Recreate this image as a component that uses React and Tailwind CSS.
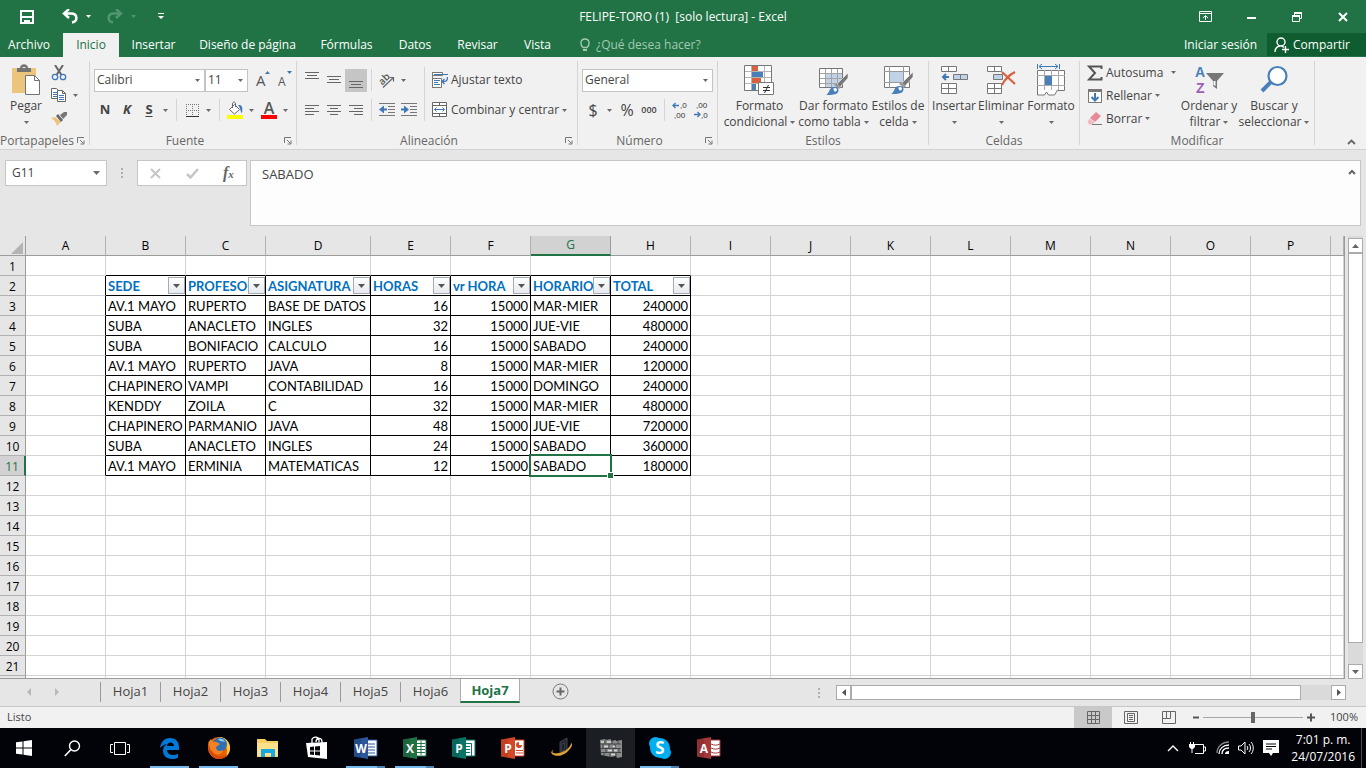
const COLUMNS = [
  { letter: 'A', width: 'w-20' },
  { letter: 'B', width: 'w-20' },
  { letter: 'C', width: 'w-20' },
  { letter: 'D', width: 'w-[105px]' },
  { letter: 'E', width: 'w-20' },
  { letter: 'F', width: 'w-20' },
  { letter: 'G', width: 'w-20' },
  { letter: 'H', width: 'w-20' },
  { letter: 'I', width: 'w-20' },
  { letter: 'J', width: 'w-20' },
  { letter: 'K', width: 'w-20' },
  { letter: 'L', width: 'w-20' },
  { letter: 'M', width: 'w-20' },
  { letter: 'N', width: 'w-20' },
  { letter: 'O', width: 'w-20' },
  { letter: 'P', width: 'w-20' },
  { letter: '', width: 'w-auto' },
]

const HEADERS = ['SEDE', 'PROFESOR', 'ASIGNATURA', 'HORAS', 'vr HORA', 'HORARIO', 'TOTAL']

const DATA = [
  ['AV.1 MAYO', 'RUPERTO', 'BASE DE DATOS', 16, 15000, 'MAR-MIER', 240000],
  ['SUBA', 'ANACLETO', 'INGLES', 32, 15000, 'JUE-VIE', 480000],
  ['SUBA', 'BONIFACIO', 'CALCULO', 16, 15000, 'SABADO', 240000],
  ['AV.1 MAYO', 'RUPERTO', 'JAVA', 8, 15000, 'MAR-MIER', 120000],
  ['CHAPINERO', 'VAMPI', 'CONTABILIDAD', 16, 15000, 'DOMINGO', 240000],
  ['KENDDY', 'ZOILA', 'C', 32, 15000, 'MAR-MIER', 480000],
  ['CHAPINERO', 'PARMANIO', 'JAVA', 48, 15000, 'JUE-VIE', 720000],
  ['SUBA', 'ANACLETO', 'INGLES', 24, 15000, 'SABADO', 360000],
  ['AV.1 MAYO', 'ERMINIA', 'MATEMATICAS', 12, 15000, 'SABADO', 180000],
]

const TABS = [
  { name: 'Inicio', width: 'w-14' },
  { name: 'Insertar', width: 'w-[69px]' },
  { name: 'Diseño de página', width: 'w-[119px]' },
  { name: 'Fórmulas', width: 'w-[79px]' },
  { name: 'Datos', width: 'w-[58px]' },
  { name: 'Revisar', width: 'w-[67px]' },
  { name: 'Vista', width: 'w-[53px]' },
]

const SHEETS = ['Hoja1', 'Hoja2', 'Hoja3', 'Hoja4', 'Hoja5', 'Hoja6', 'Hoja7']
const ACTIVE_SHEET = 'Hoja7'

const SELECTED = { row: 11, col: 6 }
const ROW_COUNT = 22

/* ---------- small shared pieces ---------- */

function Svg({ w = 16, h = 16, children, className = '' }) {
  return (
    <svg width={w} height={h} viewBox={`0 0 ${w} ${h}`} fill="none" className={`shrink-0 ${className}`} aria-hidden="true">
      {children}
    </svg>
  )
}

function Caret({ className = 'text-[#6a6a6a]' }) {
  return (
    <Svg w={5} h={3} className={className}>
      <path d="M0 0h5L2.5 3z" fill="currentColor" />
    </Svg>
  )
}

function Divider({ className = 'h-[22px]' }) {
  return <div className={`w-px shrink-0 bg-[#d4d4d4] ${className}`} />
}

function IconButton({ label, active, children }) {
  return (
    <button
      type="button"
      aria-label={label}
      className={`flex h-[23px] w-[22px] shrink-0 items-center justify-center ${active ? 'bg-[#c5c5c5]' : ''}`}
    >
      {children}
    </button>
  )
}

function CaretButton({ label }) {
  return (
    <button type="button" aria-label={label} className="flex h-[23px] w-2.5 shrink-0 items-center justify-center">
      <Caret />
    </button>
  )
}

function Launcher() {
  return (
    <Svg w={8} h={8}>
      <path d="M.5 6V.5H7M3 3l3.5 3.5M7 3.500V7H3.500" stroke="#777" />
    </Svg>
  )
}

function Group({ title, launcher, width, children }) {
  return (
    <>
      <div className={`flex h-[88px] shrink-0 flex-col ${width}`}>
        <div className="flex h-[72px]">{children}</div>
        <div className="flex h-[17px] items-center text-[#666]">
          <span className="min-w-0 flex-1 text-center leading-[17px] whitespace-nowrap">{title}</span>
          {launcher && (
            <button type="button" aria-label={`Más opciones de ${title}`} className="mx-1 shrink-0">
              <Launcher />
            </button>
          )}
        </div>
      </div>
      <Divider className="h-[84px]" />
    </>
  )
}

function BigButton({ icon, lines, width, caretBelow }) {
  return (
    <button type="button" className={`flex shrink-0 flex-col items-center pt-[3px] leading-4 ${width}`}>
      <span className="mb-0.5 flex h-8 items-center">{icon}</span>
      <span className="whitespace-nowrap">{lines[0]}</span>
      {caretBelow ? (
        <span className="flex h-4 items-center"><Caret /></span>
      ) : (
        <span className="flex items-center gap-[3px] whitespace-nowrap">
          {lines[1]}
          <Caret />
        </span>
      )}
    </button>
  )
}

function Combo({ label, value, width }) {
  return (
    <div className={`relative shrink-0 ${width}`}>
      <select
        aria-label={label}
        defaultValue={value}
        className="h-[23px] w-full appearance-none border border-[#c3c3c3] bg-white pl-0.5 text-[#444] outline-none"
      >
        <option>{value}</option>
      </select>
      <Caret className="pointer-events-none absolute top-2.5 right-[5px] text-[#6a6a6a]" />
    </div>
  )
}

/* ---------- ribbon icons ---------- */

function LinesIcon({ rows }) {
  return (
    <Svg>
      {rows.map(([x, y, w]) => (
        <rect key={y} x={x} y={y} width={w} height="1" fill="#666" />
      ))}
    </Svg>
  )
}

const ALIGN_TOP = [[1, 0, 14], [3, 3, 10], [1, 6, 14]]
const ALIGN_MIDDLE = [[1, 4, 14], [3, 7, 10], [1, 10, 14]]
const ALIGN_BOTTOM = [[1, 9, 14], [3, 12, 10], [1, 15, 14]]
const ALIGN_LEFT = [[1, 3, 14], [1, 6, 9], [1, 9, 14], [1, 12, 9]]
const ALIGN_CENTER = [[1, 3, 14], [4, 6, 8], [1, 9, 14], [4, 12, 8]]
const ALIGN_RIGHT = [[1, 3, 14], [6, 6, 9], [1, 9, 14], [6, 12, 9]]

function IndentIcon({ right }) {
  return (
    <Svg>
      <path d="M0 1.500h16M9 4.500h7M9 7.500h7M9 10.500h7M0 13.500h16" stroke="#777" />
      <path d={right ? 'M0 6.500h3v-3l5 4-5 4v-3H0z' : 'M8 6.500H5v-3l-5 4 5 4v-3h3z'} fill="#3f78b5" />
    </Svg>
  )
}

function PasteIcon() {
  return (
    <Svg w={30} h={32}>
      <path d="M1 4h24v25H1z" fill="#ecc47c" />
      <path d="M6 8V4h3c0-5 8-5 8 0h3v4z" fill="#737373" />
      <path d="M11.500 3.500h3" stroke="#eee" />
      <path d="M14.500 11.500h9l5 5v14h-14z" fill="#fff" stroke="#737373" />
      <path d="M23.500 11.500v5h5" stroke="#737373" />
    </Svg>
  )
}

function CutIcon() {
  return (
    <Svg>
      <path d="M4 0l6.500 10M12 0L5.500 10" stroke="#666" strokeWidth="2" />
      <circle cx="4" cy="12" r="2.700" stroke="#3f78b5" strokeWidth="1.300" />
      <circle cx="12" cy="12" r="2.700" stroke="#3f78b5" strokeWidth="1.300" />
    </Svg>
  )
}

function CopyIcon() {
  return (
    <Svg>
      <path d="M.5 .5h5l3 3v7h-8z" fill="#fff" stroke="#666" />
      <path d="M2 4.500h4M2 6.500h4M2 8.500h4" stroke="#3f78b5" />
      <path d="M6.500 2.500h5l3 3v8h-8z" fill="#fff" stroke="#666" />
      <path d="M11.500 2.500v3h3" stroke="#666" />
      <path d="M8 7.500h5M8 9.500h5M8 11.500h5" stroke="#3f78b5" />
    </Svg>
  )
}

function BrushIcon() {
  return (
    <Svg>
      <path d="M0 7l4-1 6 5-4 4c-1-4-3-6-6-8z" fill="#ecc47c" />
      <path d="M5 5l2-2 5 6-2 2z" fill="#666" />
      <path d="M9 4l4-3h3v3l-4 4z" fill="#777" />
    </Svg>
  )
}

function FontSizeIcon({ grow }) {
  return (
    <Svg w={18} h={20}>
      <text x="2" y="16" fontSize={grow ? 15 : 12} fontWeight="500" fill="#555">A</text>
      <path d={grow ? 'M13.500 1L16 4h-5z' : 'M11 1h5l-2.500 3z'} fill="#3f78b5" />
    </Svg>
  )
}

function BordersIcon() {
  return (
    <Svg>
      <path d="M2 2.500h13M2 8.500h13" stroke="#777" strokeDasharray="1 1" />
      <path d="M2.500 2v12M8.500 2v12M14.500 2v12" stroke="#777" strokeDasharray="1 1" />
      <path d="M2 14.500h13" stroke="#333" />
    </Svg>
  )
}

function FillIcon() {
  return (
    <Svg w={16} h={18}>
      <path d="M2.500 8.500l5-5 5 5-5 4.500z" fill="#fff" stroke="#666" />
      <path d="M5.500 7V3c0-2.500 3-2.500 3 0v3" stroke="#666" />
      <path d="M11 4c4-.5 5 2 4 8-2-1-1-5-4-8z" fill="#3f78b5" />
      <rect y="14" width="16" height="4" fill="#ff0" />
    </Svg>
  )
}

function FontColorIcon() {
  return (
    <span className="flex w-4 flex-col items-center text-[#555]">
      <span className="text-base leading-[14px] font-semibold">A</span>
      <span className="h-1 w-4 bg-[#f00]" />
    </span>
  )
}

function OrientationIcon() {
  return (
    <Svg w={20} h={20}>
      <text x="2" y="12" fontSize="10" fontWeight="600" fill="#555" transform="rotate(-45 8 10)">ab</text>
      <path d="M6 17.500L16 8M12.500 7.500h4v4" stroke="#666" strokeWidth="1.200" />
    </Svg>
  )
}

function WrapIcon() {
  return (
    <Svg>
      <path d="M.5 0v16" stroke="#777" />
      <path d="M.5 3.500v-3h10v3zM.5 15.500v-9h9v9z" fill="#fff" stroke="#777" />
      <path d="M2 2.500h14M2 8.500h6M2 10.500h4M2 12.500h6" stroke="#3f78b5" />
      <path d="M15.500 5c0 4-1 4.500-5 4.500M12.500 7l-2.500 2.500 2.500 2.500" stroke="#3f78b5" strokeWidth="1.300" />
    </Svg>
  )
}

function MergeIcon() {
  return (
    <Svg>
      <path d="M.5.5h14v14H.5z" fill="#fff" stroke="#666" />
      <path d="M.5 3.500h14M.5 11.500h14M7.500.5v3M7.500 11.500v3" stroke="#666" />
      <path d="M2.500 7.500h10M4.500 5.500l-2 2 2 2M10.500 5.500l2 2-2 2" stroke="#3f78b5" />
    </Svg>
  )
}

function DecimalIcon({ more }) {
  return (
    <Svg w={18} h={20} className="font-['Liberation_Sans',sans-serif]">
      {more ? (
        <>
          <path d="M8 5.500H2M4.500 3L2 5.500 4.500 8" stroke="#3f78b5" strokeWidth="1.300" />
          <text x="9" y="8" fontSize="8" fill="#333">,0</text>
          <text x="3" y="18" fontSize="8" fill="#333">,00</text>
        </>
      ) : (
        <>
          <text x="3" y="8" fontSize="8" fill="#333">,00</text>
          <path d="M1 14.500h6M4.500 12L7 14.500 4.500 17" stroke="#3f78b5" strokeWidth="1.300" />
          <text x="8" y="18" fontSize="8" fill="#333">,0</text>
        </>
      )}
    </Svg>
  )
}

function ConditionalIcon() {
  return (
    <Svg w={31} h={31}>
      <path d="M1 1h26v24H1z" fill="#fff" />
      <path d="M7.500 1v24M20.500 1v24M1 6.500h26M1 12.500h26M1 18.500h26" stroke="#b5b5b5" />
      <path d="M8 1h6v5H8zM8 13h9v5H8z" fill="#d9603f" />
      <path d="M8 7h11v5H8zM8 19h4v6H8z" fill="#4a80ba" />
      <path d="M.5.5h27v25H.5z" stroke="#777" />
      <path d="M14.500 17.500h15v12h-15z" fill="#fff" stroke="#777" />
      <path d="M19 22.500h7M19 25.500h7M24.500 20l-4 8" stroke="#333" />
    </Svg>
  )
}

function PaintBrush() {
  return (
    <>
      <path d="M28 8v5l-8 9-3-3z" fill="#777" stroke="#f1f1f1" strokeWidth=".6" />
      <path d="M16 18l5 4-2 2-5-4z" fill="#999" />
      <path d="M6 30c4-2 3-9 9-8 4 0 5 5 1 7-3 1-7 1-10 1z" fill="#4a80ba" />
      <path d="M13 24c2-2 4-1 4 1-1 2-3 2-3 0z" fill="#fff" />
    </>
  )
}

function TableFormatIcon() {
  return (
    <Svg w={31} h={31}>
      <path d="M1 4h24v19H1z" fill="#fff" />
      <path d="M7 9h18v14H7z" fill="#bfd2e8" />
      <path d="M7.500 4v19M13.500 4v19M19.500 4v19M1 8.500h24M1 13.500h24M1 18.500h24" stroke="#a3a3a3" />
      <path d="M1.500 3.500h23v19h-23z" stroke="#777" />
      <g transform="translate(2 0)"><PaintBrush /></g>
    </Svg>
  )
}

function CellStylesIcon() {
  return (
    <Svg w={31} h={31}>
      <path d="M1.500 1.500h25v21h-25z" fill="#fff" stroke="#777" />
      <path d="M6.500 1v22M20.500 1v22M1 6.500h26M1 17.500h26" stroke="#999" />
      <path d="M7 7h13v10H7z" fill="#bfd2e8" />
      <g transform="translate(2 -1)"><PaintBrush /></g>
    </Svg>
  )
}

function InsertCellsIcon() {
  return (
    <Svg w={28} h={30}>
      <path d="M1.500 1.500h15v5h-15zM1.500 18.500h15v10h-15z" fill="#fff" stroke="#777" />
      <path d="M8.500 1v6M8.500 18v11M1 23.500h16" stroke="#777" />
      <path d="M13.500 9.500h14v5h-14z" fill="#bfd2e8" stroke="#777" />
      <path d="M20.500 9v6" stroke="#777" />
      <path d="M9 12H4M6 9l-3 3 3 3" stroke="#3f78b5" strokeWidth="2" />
    </Svg>
  )
}

function DeleteCellsIcon() {
  return (
    <Svg w={30} h={30}>
      <path d="M1.500 1.500h14v5h-14zM1.500 18.500h14v10h-14z" fill="#fff" stroke="#777" />
      <path d="M8.500 1v6M8.500 18v11M1 23.500h15" stroke="#777" />
      <path d="M7.500 9.500h9v5h-9z" fill="#bfd2e8" stroke="#777" />
      <path d="M16 7l13 12M29 7c-6 3-10 7-13 13" stroke="#d9603f" strokeWidth="2.200" />
    </Svg>
  )
}

function FormatCellsIcon() {
  return (
    <Svg w={28} h={32}>
      <path d="M.5 0v5M22.500 0v5M2 2.500h19M5 0L2 2.500 5 5M18 0l3 2.500L18 5" stroke="#3f78b5" />
      <path d="M.5 6.500h27v20H.5z" fill="#fff" stroke="#777" />
      <path d="M7.500 6v20M14.500 6v20M21.500 6v20M0 11.500h28M0 21.500h28" stroke="#aaa" />
      <path d="M8 12h7v9H8z" fill="#4a80ba" />
      <path d="M.5 26v5h7l2-3 2 3h6l3-5" fill="#fff" stroke="#777" />
    </Svg>
  )
}

function SigmaIcon() {
  return (
    <Svg>
      <path d="M14.500 4V1.500H2L8 8l-6 6.500h12.500V12" stroke="#555" strokeWidth="2" />
    </Svg>
  )
}

function FillDownIcon() {
  return (
    <Svg>
      <path d="M1.500 1.500h13v13h-13z" fill="#fff" stroke="#777" />
      <path d="M1 1h14v3H1z" fill="#777" />
      <path d="M8 5v7M4.500 9L8 12.500 11.500 9" stroke="#3f78b5" strokeWidth="2" />
    </Svg>
  )
}

function EraserIcon() {
  return (
    <Svg>
      <path d="M9 1l5 4-6 6-5-4z" fill="#e8899a" />
      <path d="M2.500 7.500l5 4-2.500 2H2L.5 11z" fill="#f4b6c0" />
      <path d="M5 13.500h10" stroke="#777" />
    </Svg>
  )
}

function SortIcon() {
  return (
    <Svg w={30} h={32} className="font-['Liberation_Sans',sans-serif]">
      <text x="1" y="13" fontSize="14" fontWeight="700" fill="#4a80ba">A</text>
      <text x="2" y="29" fontSize="14" fontWeight="700" fill="#9a5fb5">Z</text>
      <path d="M12 9h18l-7 8v8l-4-3v-5z" fill="#777" />
      <path d="M19.500 17h2v5l-2-1z" fill="#fff" />
    </Svg>
  )
}

function FindIcon() {
  return (
    <Svg w={30} h={30}>
      <path d="M12 17L3 26" stroke="#4a80ba" strokeWidth="4" />
      <circle cx="18.500" cy="11" r="9" fill="#fff" stroke="#4a80ba" strokeWidth="2.200" />
    </Svg>
  )
}

/* ---------- window areas ---------- */

function TitleBar() {
  return (
    <div className="grid h-[33px] grid-cols-[1fr_auto_1fr] items-center">
      <div className="flex items-center pl-5 text-white">
        <button type="button" aria-label="Guardar" className="mr-7">
          <Svg w={14} h={14}>
            <path d="M1 1h12v12H1z" stroke="currentColor" strokeWidth="2" />
            <path d="M1 6h12v2H1zM4 10h6v4H8v-2H6v2H4z" fill="currentColor" />
          </Svg>
        </button>
        <button type="button" aria-label="Deshacer" className="mr-2">
          <Svg w={16} h={16}>
            <path d="M7 0L2 4.500 7 9M2 4.500h7c7 0 7 8 1 9" stroke="currentColor" strokeWidth="2.500" />
          </Svg>
        </button>
        <button type="button" aria-label="Lista de deshacer" className="mr-4"><Caret className="text-white" /></button>
        <button type="button" aria-label="Rehacer" className="mr-2 text-[#4f9671]">
          <Svg w={16} h={16}>
            <path d="M9 0l5 4.500L9 9M14 4.500H7c-7 0-7 8-1 9" stroke="currentColor" strokeWidth="2.500" />
          </Svg>
        </button>
        <button type="button" aria-label="Lista de rehacer" className="mr-[22px]"><Caret className="text-[#4f9671]" /></button>
        <button type="button" aria-label="Personalizar barra de acceso rápido">
          <Svg w={6} h={7}>
            <path d="M0 0h6v1H0zM0 3h6L3 6z" fill="currentColor" />
          </Svg>
        </button>
      </div>
      <h1 className="whitespace-pre text-white">FELIPE-TORO (1)  [solo lectura] - Excel</h1>
      <div className="flex items-center justify-end text-white">
        <button type="button" aria-label="Opciones de la cinta" className="flex w-[46px] justify-center">
          <Svg w={13} h={11}>
            <path d="M.5.500h12v10H.5zM1 2.500h11M6.500 9V5M4 7l2.500-2.500L9 7" stroke="currentColor" />
          </Svg>
        </button>
        <button type="button" aria-label="Minimizar" className="flex w-[46px] justify-center">
          <Svg w={9} h={4}><path d="M0 2h9v2H0z" fill="currentColor" /></Svg>
        </button>
        <button type="button" aria-label="Restaurar" className="flex w-[46px] justify-center">
          <Svg w={10} h={10}>
            <path d="M.5 4h7v5.500h-7zM2.500 3V1h7v5.500H8" stroke="currentColor" />
            <path d="M0 3h8v2H0zM2 0h8v2H2z" fill="currentColor" />
          </Svg>
        </button>
        <button type="button" aria-label="Cerrar" className="flex w-[46px] justify-center">
          <Svg w={10} h={10}><path d="M1 1l8 8M9 1L1 9" stroke="currentColor" strokeWidth="2" /></Svg>
        </button>
      </div>
    </div>
  )
}

function TabBar() {
  return (
    <div className="flex h-6 text-white">
      <button type="button" className="mr-[5px] w-[58px]">Archivo</button>
      {TABS.map((tab) => (
        <button
          key={tab.name}
          type="button"
          className={`whitespace-nowrap ${tab.width} ${tab.name === 'Inicio' ? 'bg-[#f1f1f1] text-[#217346]' : ''}`}
        >
          {tab.name}
        </button>
      ))}
      <label className="ml-4 flex items-center gap-1.5 text-[#a3c9b2]">
        <Svg w={10} h={14}>
          <path d="M3 9.500C0 7 0 1 5 1s5 6 2 8.500z" stroke="currentColor" strokeWidth="1.400" />
          <path d="M3 11h4v2H3z" fill="currentColor" />
        </Svg>
        <input
          type="text"
          placeholder="¿Qué desea hacer?"
          className="w-32 bg-transparent outline-none placeholder:text-[#a3c9b2]"
        />
      </label>
      <button type="button" className="mr-2.5 ml-auto">Iniciar sesión</button>
      <button type="button" className="flex h-[23px] w-[99px] items-center gap-1 bg-[#0e5c2f] pl-[7px]">
        <Svg w={15} h={16}>
          <circle cx="7" cy="5" r="4" stroke="currentColor" strokeWidth="1.400" />
          <path d="M1 15c0-4 2-5.500 5-6M7 8.500l3 2M8 12.500h7M11.500 9v7" stroke="currentColor" strokeWidth="1.400" />
        </Svg>
        Compartir
      </button>
    </div>
  )
}

function Ribbon() {
  return (
    <div className="flex border-b border-[#d2d2d2] bg-[#f1f1f1] pt-1 text-[#444]">
      <Group title="Portapapeles" launcher width="w-[89px]">
        <BigButton width="w-12 pl-1" icon={<PasteIcon />} lines={['Pegar']} caretBelow />
        <div className="flex flex-col">
          <div className="flex"><IconButton label="Cortar"><CutIcon /></IconButton></div>
          <div className="flex items-center">
            <IconButton label="Copiar"><CopyIcon /></IconButton>
            <CaretButton label="Opciones de copiar" />
          </div>
          <div className="flex"><IconButton label="Copiar formato"><BrushIcon /></IconButton></div>
        </div>
      </Group>

      <Group title="Fuente" launcher width="w-[206px]">
        <div className="flex flex-col px-1 pt-1">
          <div className="flex h-[30px] items-center">
            <Combo label="Fuente" value="Calibri" width="w-[111px]" />
            <Combo label="Tamaño de fuente" value="11" width="w-[43px]" />
            <div className="ml-1 flex">
              <IconButton label="Aumentar tamaño"><FontSizeIcon grow /></IconButton>
              <IconButton label="Disminuir tamaño"><FontSizeIcon /></IconButton>
            </div>
          </div>
          <div className="flex h-[30px] items-center">
            <IconButton label="Negrita"><span className="text-[13px] font-bold">N</span></IconButton>
            <IconButton label="Cursiva"><span className="text-[13px] font-bold italic">K</span></IconButton>
            <IconButton label="Subrayado"><span className="text-[13px] font-bold underline underline-offset-2">S</span></IconButton>
            <CaretButton label="Tipos de subrayado" />
            <Divider className="mr-1 ml-1.5 h-[22px]" />
            <IconButton label="Bordes"><BordersIcon /></IconButton>
            <CaretButton label="Tipos de borde" />
            <Divider className="mr-1 ml-1.5 h-[22px]" />
            <IconButton label="Color de relleno"><FillIcon /></IconButton>
            <CaretButton label="Colores de relleno" />
            <div className="ml-0.5 flex">
              <IconButton label="Color de fuente"><FontColorIcon /></IconButton>
              <CaretButton label="Colores de fuente" />
            </div>
          </div>
        </div>
      </Group>

      <Group title="Alineación" launcher width="w-[280px]">
        <div className="flex flex-col pt-1 pl-1">
          <div className="flex h-[30px] items-center">
            <IconButton label="Alinear arriba"><LinesIcon rows={ALIGN_TOP} /></IconButton>
            <IconButton label="Alinear en el medio"><LinesIcon rows={ALIGN_MIDDLE} /></IconButton>
            <IconButton label="Alinear abajo" active><LinesIcon rows={ALIGN_BOTTOM} /></IconButton>
            <Divider className="mx-1 h-[22px]" />
            <IconButton label="Orientación"><OrientationIcon /></IconButton>
            <CaretButton label="Tipos de orientación" />
          </div>
          <div className="flex h-[30px] items-center">
            <IconButton label="Alinear a la izquierda"><LinesIcon rows={ALIGN_LEFT} /></IconButton>
            <IconButton label="Centrar"><LinesIcon rows={ALIGN_CENTER} /></IconButton>
            <IconButton label="Alinear a la derecha"><LinesIcon rows={ALIGN_RIGHT} /></IconButton>
            <Divider className="mx-1 h-[22px]" />
            <IconButton label="Disminuir sangría"><IndentIcon /></IconButton>
            <IconButton label="Aumentar sangría"><IndentIcon right /></IconButton>
          </div>
        </div>
        <Divider className="mt-1.5 mr-[7px] ml-1 h-[54px]" />
        <div className="flex flex-1 flex-col pt-1">
          <button type="button" className="flex h-[30px] items-center gap-[3px] whitespace-nowrap">
            <WrapIcon />
            Ajustar texto
          </button>
          <div className="flex h-[30px] items-center justify-between pr-2">
            <button type="button" className="flex items-center gap-[3px] whitespace-nowrap">
              <MergeIcon />
              Combinar y centrar
            </button>
            <CaretButton label="Opciones de combinar" />
          </div>
        </div>
      </Group>

      <Group title="Número" launcher width="w-[139px]">
        <div className="flex flex-col px-1 pt-1">
          <div className="flex h-[30px] items-center">
            <Combo label="Formato de número" value="General" width="w-[131px]" />
          </div>
          <div className="flex h-[30px] items-center">
            <IconButton label="Formato de contabilidad"><span className="text-base">$</span></IconButton>
            <CaretButton label="Monedas" />
            <div className="ml-0.5 flex">
              <IconButton label="Estilo porcentual"><span className="text-base">%</span></IconButton>
              <IconButton label="Estilo millares"><span className="text-[9px] font-semibold">000</span></IconButton>
            </div>
            <Divider className="mx-1 h-[22px]" />
            <IconButton label="Aumentar decimales"><DecimalIcon more /></IconButton>
            <IconButton label="Disminuir decimales"><DecimalIcon /></IconButton>
          </div>
        </div>
      </Group>

      <Group title="Estilos" width="w-[210px]">
        <div className="flex pl-1">
          <BigButton width="w-[75px]" icon={<ConditionalIcon />} lines={['Formato', 'condicional']} />
          <BigButton width="w-[73px]" icon={<TableFormatIcon />} lines={['Dar formato', 'como tabla']} />
          <BigButton width="w-[56px]" icon={<CellStylesIcon />} lines={['Estilos de', 'celda']} />
        </div>
      </Group>

      <Group title="Celdas" width="w-[150px]">
        <div className="flex pl-0.5">
          <BigButton width="w-[46px]" icon={<InsertCellsIcon />} lines={['Insertar']} caretBelow />
          <BigButton width="w-[48px]" icon={<DeleteCellsIcon />} lines={['Eliminar']} caretBelow />
          <BigButton width="w-[52px]" icon={<FormatCellsIcon />} lines={['Formato']} caretBelow />
        </div>
      </Group>

      <Group title="Modificar" width="w-[234px]">
        <div className="flex w-[100px] flex-col pl-[7px]">
          <button type="button" className="flex h-[23px] items-center gap-[3px]">
            <SigmaIcon />
            Autosuma
            <Caret className="mr-1 ml-auto text-[#6a6a6a]" />
          </button>
          <button type="button" className="flex h-[23px] items-center gap-[3px]">
            <FillDownIcon />
            Rellenar
            <Caret />
          </button>
          <button type="button" className="flex h-[23px] items-center gap-[3px]">
            <EraserIcon />
            Borrar
            <Caret />
          </button>
        </div>
        <BigButton width="w-[58px]" icon={<SortIcon />} lines={['Ordenar y', 'filtrar']} />
        <BigButton width="w-[72px]" icon={<FindIcon />} lines={['Buscar y', 'seleccionar']} />
      </Group>

      <button type="button" aria-label="Contraer la cinta" className="mr-2.5 mb-1 ml-auto self-end">
        <Svg w={9} h={6}><path d="M1 5l3.500-3.500L8 5" stroke="#666" strokeWidth="1.800" /></Svg>
      </button>
    </div>
  )
}

function Dots() {
  return (
    <Svg w={2} h={10}>
      <path d="M0 0h2v2H0zM0 4h2v2H0zM0 8h2v2H0z" fill="#b0b0b0" />
    </Svg>
  )
}

function FormulaBar() {
  return (
    <div className="flex items-start py-2.5 pr-[5px] pl-[5px] text-[#444]">
      <div className="flex h-[26px] w-[102px] items-center border border-[#c6c6c6] bg-white pr-1.5">
        <input aria-label="Cuadro de nombres" defaultValue="G11" className="min-w-0 flex-1 pl-1.5 outline-none" />
        <Svg w={7} h={4}><path d="M0 0h7L3.500 4z" fill="#6a6a6a" /></Svg>
      </div>
      <div className="mx-3.5 flex h-[26px] items-center"><Dots /></div>
      <div className="mr-[3px] flex h-[26px] w-[110px] items-center justify-around border border-[#c6c6c6] bg-white">
        <button type="button" aria-label="Cancelar">
          <Svg w={11} h={11}><path d="M1 1l9 9M10 1l-9 9" stroke="#c6c6c6" strokeWidth="2" /></Svg>
        </button>
        <button type="button" aria-label="Introducir">
          <Svg w={13} h={11}><path d="M1 6l3.500 3.500L12 1" stroke="#c6c6c6" strokeWidth="2.500" /></Svg>
        </button>
        <button type="button" className="font-['Liberation_Serif',serif] text-base leading-4 font-bold italic text-[#666]">
          f<span className="text-[11px]">x</span>
        </button>
      </div>
      <div className="flex h-[66px] flex-1 items-start border border-[#c6c6c6] bg-[#fdfdfd] pr-1">
        <textarea
          aria-label="Barra de fórmulas"
          defaultValue="SABADO"
          className="h-16 flex-1 resize-none py-1 pl-[11px] text-[13px] leading-[18px] outline-none"
        />
        <button type="button" aria-label="Contraer barra de fórmulas" className="mt-2">
          <Svg w={8} h={6}><path d="M1 5l3-3 3 3" stroke="#666" strokeWidth="2" /></Svg>
        </button>
      </div>
    </div>
  )
}

function FilterButton({ name }) {
  return (
    <button
      type="button"
      aria-label={`Filtrar ${name}`}
      className="absolute top-px right-0 flex size-[17px] items-center justify-center border border-[#a5abb5] bg-linear-to-b from-white to-[#e6e9ef]"
    >
      <Svg w={7} h={4}><path d="M0 0h7L3.500 4z" fill="#555" /></Svg>
    </button>
  )
}

function cellValue(row, col) {
  if (col < 1 || col > 7) return null
  if (row === 2) return HEADERS[col - 1]
  return DATA[row - 3]?.[col - 1] ?? null
}

// A cell only draws its right and bottom edge, so the table frame also colours its neighbours
function cellBorders(row, col) {
  const right = row >= 2 && row <= 11 && col <= 7
  const bottom = row >= 1 && row <= 11 && col >= 1 && col <= 7
  return `${right ? 'border-r-black' : 'border-r-[#d4d4d4]'} ${bottom ? 'border-b-black' : 'border-b-[#d4d4d4]'}`
}

function Cell({ row, col }) {
  const value = cellValue(row, col)
  const isSelected = row === SELECTED.row && col === SELECTED.col
  const isHeader = row === 2 && value !== null

  return (
    <td
      className={`relative border-r border-b px-0.5 py-0 ${cellBorders(row, col)} ${
        typeof value === 'number' ? 'text-right' : 'text-left'
      }`}
    >
      <div className={`h-[19px] overflow-hidden leading-[21px] whitespace-nowrap ${isHeader ? 'font-bold text-[#0070c0]' : 'text-black'}`}>
        {value}
      </div>
      {isHeader && <FilterButton name={value} />}
      {isSelected && (
        <div className="pointer-events-none absolute -inset-0.5 z-10 border-2 border-[#217346]">
          <div className="absolute -right-[3px] -bottom-[3px] size-[5px] bg-[#217346] outline-1 outline-white" />
        </div>
      )}
    </td>
  )
}

function Sheet() {
  const rows = Array.from({ length: ROW_COUNT }, (_, i) => i + 1)

  return (
    <div className="flex min-h-0 flex-1">
      <div className="min-w-0 flex-1 overflow-hidden border-r border-b border-[#9b9b9b] bg-white">
        <table className="w-full table-fixed border-separate border-spacing-0 font-['Lato','Open_Sans',sans-serif] text-[13px]">
          <colgroup>
            <col className="w-[26px]" />
            {COLUMNS.map((c, i) => <col key={i} className={c.width} />)}
          </colgroup>
          <thead>
            <tr className="h-5">
              <th className="border-r border-b border-[#9b9b9b] bg-[#e6e6e6] p-0">
                <Svg w={12} h={12} className="mt-1 mr-0.5 ml-auto"><path d="M12 0v12H0z" fill="#b4b4b4" /></Svg>
              </th>
              {COLUMNS.map((c, i) => (
                <th
                  key={i}
                  scope="col"
                  className={`h-5 border-r p-0 font-['Open_Sans',sans-serif] text-xs leading-[18px] font-normal ${
                    i === SELECTED.col
                      ? 'border-b-2 border-r-[#9b9b9b] border-b-[#217346] bg-[#d2d2d2] text-[#217346]'
                      : 'border-b border-r-[#b1b1b1] border-b-[#9b9b9b] bg-[#e6e6e6] text-black'
                  }`}
                >
                  {c.letter}
                </th>
              ))}
            </tr>
          </thead>
          <tbody>
            {rows.map((row) => (
              <tr key={row} className="h-5">
                <th
                  scope="row"
                  className={`border-b border-b-[#b1b1b1] p-0 font-['Open_Sans',sans-serif] text-xs font-normal ${
                    row === SELECTED.row
                      ? 'border-r-2 border-r-[#217346] bg-[#d2d2d2] text-[#217346]'
                      : 'border-r border-r-[#9b9b9b] bg-[#e6e6e6] text-black'
                  }`}
                >
                  <div className="h-[19px] leading-[21px]">{row}</div>
                </th>
                {COLUMNS.map((_, col) => <Cell key={col} row={row} col={col} />)}
              </tr>
            ))}
          </tbody>
        </table>
      </div>
      <VerticalScroll />
    </div>
  )
}

function VerticalScroll() {
  return (
    <div className="mr-[3px] ml-[3px] flex w-[15px] flex-col bg-[#dadada] pt-0.5">
      <button type="button" aria-label="Desplazar arriba" className="flex h-[15px] items-center justify-center border border-[#ababab] bg-white">
        <Svg w={7} h={4}><path d="M3.500 0L7 4H0z" fill="#666" /></Svg>
      </button>
      <div className="flex-1">
        <div className="h-[95%] border border-[#ababab] bg-white" />
      </div>
      <button type="button" aria-label="Desplazar abajo" className="flex h-[15px] items-center justify-center border border-[#ababab] bg-white">
        <Svg w={7} h={4}><path d="M0 0h7L3.500 4z" fill="#666" /></Svg>
      </button>
    </div>
  )
}

function SheetTabs() {
  return (
    <div className="flex h-7 items-start border-b border-[#c6c6c6] text-[13px] text-[#444]">
      <div className="flex h-[25px] w-[100px] items-center pl-[27px]">
        <button type="button" aria-label="Hoja anterior" className="mr-6">
          <Svg w={4} h={8}><path d="M4 0v8L0 4z" fill="#b8b8b8" /></Svg>
        </button>
        <button type="button" aria-label="Hoja siguiente">
          <Svg w={4} h={8}><path d="M0 0v8l4-4z" fill="#b8b8b8" /></Svg>
        </button>
      </div>
      {SHEETS.map((name) =>
        name === ACTIVE_SHEET ? (
          <button
            key={name}
            type="button"
            className="h-6 w-[60px] border-x border-b-2 border-x-[#ababab] border-b-[#217346] bg-white pt-0.5 font-bold text-[#217346]"
          >
            {name}
          </button>
        ) : (
          <button key={name} type="button" className="mt-[3px] h-5 w-[60px] border-l border-[#9b9b9b]">
            {name}
          </button>
        ),
      )}
      <button type="button" aria-label="Hoja nueva" className="mt-1 ml-8">
        <Svg w={17} h={17}>
          <circle cx="8.500" cy="8.500" r="7.500" stroke="#777" />
          <path d="M8.500 4.500v8M4.500 8.500h8" stroke="#666" strokeWidth="2" />
        </Svg>
      </button>
      <div className="ml-auto flex items-center pt-1.5 pr-5">
        <Dots />
        <div className="ml-4 flex h-[15px] w-[510px] bg-[#dadada]">
          <button type="button" aria-label="Desplazar a la izquierda" className="flex w-[15px] items-center justify-center border border-[#ababab] bg-white">
            <Svg w={4} h={7}><path d="M4 0v7L0 3.500z" fill="#555" /></Svg>
          </button>
          <div className="mr-[30px] flex-1 border border-[#ababab] bg-white" />
          <button type="button" aria-label="Desplazar a la derecha" className="flex w-[15px] items-center justify-center border border-[#ababab] bg-white">
            <Svg w={4} h={7}><path d="M0 0v7l4-3.500z" fill="#555" /></Svg>
          </button>
        </div>
      </div>
    </div>
  )
}

function StatusBar() {
  return (
    <div className="flex h-[21px] items-center bg-[#f1f1f1] pl-[7px] text-[11px] text-[#444]">
      <span>Listo</span>
      <div className="ml-auto flex h-full items-center">
        <button type="button" aria-label="Vista normal" className="flex h-full w-[38px] items-center justify-center bg-[#c9c9c9]">
          <Svg w={13} h={13}><path d="M.5.500h12v12H.5zM4.500 0v13M8.500 0v13M0 4.500h13M0 8.500h13" stroke="#666" /></Svg>
        </button>
        <button type="button" aria-label="Diseño de página" className="flex h-full w-[38px] items-center justify-center">
          <Svg w={14} h={13}><path d="M.5.500h13v12H.5zM3.500 2.500h7v8h-7zM5 4.500h4M5 6.500h4M5 8.500h4" stroke="#666" /></Svg>
        </button>
        <button type="button" aria-label="Vista previa de salto de página" className="flex h-full w-[38px] items-center justify-center">
          <Svg w={14} h={13}><path d="M.5.500h13v12H.5zM4.500 0v7M8.500 0v7.500H0" stroke="#666" /></Svg>
        </button>
        <button type="button" aria-label="Alejar" className="ml-[5px]">
          <Svg w={6} h={9}><path d="M0 3.500h6v2H0z" fill="#555" /></Svg>
        </button>
        <input
          type="range"
          aria-label="Zoom"
          defaultValue="50"
          className="mx-1 h-[11px] w-[100px] appearance-none bg-[linear-gradient(#a6a6a6,#a6a6a6)] bg-[length:100%_1px] bg-center bg-no-repeat [&::-webkit-slider-thumb]:h-[11px] [&::-webkit-slider-thumb]:w-1 [&::-webkit-slider-thumb]:appearance-none [&::-webkit-slider-thumb]:bg-[#666]"
        />
        <button type="button" aria-label="Acercar" className="mr-3.5">
          <Svg w={9} h={9}><path d="M0 3.500h8v2H0zM3 .5h2v8H3z" fill="#555" /></Svg>
        </button>
        <button type="button" className="mr-2">100%</button>
      </div>
    </div>
  )
}

/* ---------- taskbar ---------- */

function OfficeIcon({ letter, color, dark, children }) {
  return (
    <Svg w={24} h={24}>
      <path d="M12 4h11v16H12z" fill="#fff" stroke={color} strokeWidth="1" />
      {children || <path d="M14 8h7M14 11h7M14 14h7M14 17h7" stroke={color} />}
      <path d="M0 3.500L14 1v22L0 20.500z" fill={color} />
      <path d="M0 3.500L7 2.200v19.600L0 20.500z" fill={dark} opacity=".4" />
      <text x="7" y="16.500" fontSize="12" fontWeight="700" fill="#fff" textAnchor="middle">{letter}</text>
    </Svg>
  )
}

function EdgeIcon() {
  return (
    <Svg w={22} h={22}>
      <path d="M1 11C2 4 6 1 11 1c6 0 9 4 9 9v3H8c0 3 3 5 6 5 2 0 4-.5 5-1.500v4C17.500 21.500 15 22 13 22 7 22 4 18 4 14c0-3 1-5 4-7-3 .5-5 2-7 4zM8 9h7c0-4-6-5-7 0z" fill="#0078d7" />
    </Svg>
  )
}

function FirefoxIcon() {
  return (
    <Svg w={24} h={24}>
      <circle cx="12" cy="12" r="11" fill="#e66000" />
      <path d="M12 1c8 0 12 7 11 13-1 3-2 5-4 7 2-7 1-12-4-16z" fill="#ffcb3d" />
      <circle cx="13" cy="8.500" r="7" fill="#2f6fb5" />
      <path d="M11 3c3-1 6 0 7 3-2-1-5 0-7-3z" fill="#8fd0ee" />
      <path d="M1.500 6L4 3l2 3c3-1 5 1 7 2l-4 3c0 4 4 5 7 3 0 4-6 6-10 3C1 15 1 10 1.500 6z" fill="#f58220" />
      <path d="M1.500 8C0 16 5 23 12 23c4 0 7-2 9-5-6 4-13 2-15-2-3-2-3-5-4.500-8z" fill="#d74a0c" />
    </Svg>
  )
}

function ExplorerIcon() {
  return (
    <Svg w={22} h={20}>
      <path d="M0 1h8l2 2h11v16H0z" fill="#f5cf62" />
      <path d="M0 5h21v13H0z" fill="#fde08a" />
      <path d="M4 19v-8h14v8h-4v-4H8v4z" fill="#19a7e0" />
    </Svg>
  )
}

function StoreIcon() {
  return (
    <Svg w={22} h={24}>
      <path d="M6 7V3c2-3 7-2 7 1v2M10 6c0-4 5-5 6-1v2" stroke="#fff" strokeWidth="1.300" />
      <path d="M0 7l21-1v17L2 21z" fill="#fff" />
      <path d="M4 11l4-.5v4H4zM9 10.500l5-.5v4.500H9zM4 15.500h4V19l-4-.5zM9 15.500h5v4L9 19z" fill="#05070c" />
    </Svg>
  )
}

function MediaIcon() {
  return (
    <Svg w={24} h={24}>
      <path d="M3 14c-2 3 0 5 3 4 6 0 11-3 15-8" stroke="#8a5a1c" strokeWidth="1.200" />
      <path d="M10 17V6l7-4v12l-3 3-2-1 2-3V7l-2 1v10c-2 3-6 1-2-1z" fill="#23252c" stroke="#555866" strokeWidth=".7" />
      <path d="M1 15c0 7 13 6 18-1 3-3 4-6 2-7 0 4-6 9-12 10-4 1-7 0-8-2z" fill="#e0a233" />
    </Svg>
  )
}

function FirewallIcon() {
  return (
    <Svg w={22} h={20}>
      <path d="M0 2l5-1 1 1 5-1v2l5-1v1l6-1v17l-5 1-1-2-5 1-5-1-5-1z" fill="#8b8d8c" />
      <path d="M0 6h21M0 10.500h21M0 14.500h21M5 2v4M12 2v4M18 3v3M3 6v4M9 6v4M15 6v4M6 11v4M13 11v4M19 11v4M4 15v3M10 15v4M16 15v4" stroke="#343638" strokeWidth=".8" />
      <path d="M1 4h3M7 4h4M13 8.500h2M4 8.500h4M8 12.500h4M14 12.500h3M11 16.500h4" stroke="#d6d8d7" strokeWidth="1.600" />
    </Svg>
  )
}

function SkypeIcon() {
  return (
    <Svg w={24} h={24}>
      <circle cx="7.500" cy="7.500" r="6.500" fill="#00aff0" />
      <circle cx="16.500" cy="16.500" r="6.500" fill="#00aff0" />
      <circle cx="12" cy="12" r="10" fill="#00aff0" />
      <text x="12" y="18" fontSize="17" fontWeight="700" fill="#fff" textAnchor="middle">S</text>
    </Svg>
  )
}

const APPS = [
  { name: 'Edge', icon: <EdgeIcon />, running: true },
  { name: 'Firefox', icon: <FirefoxIcon />, running: true },
  { name: 'Explorador de archivos', icon: <ExplorerIcon /> },
  { name: 'Tienda', icon: <StoreIcon /> },
  { name: 'Word', icon: <OfficeIcon letter="W" color="#2b579a" dark="#1a3d73" />, running: true, stacked: true },
  {
    name: 'Excel',
    icon: (
      <OfficeIcon letter="X" color="#217346" dark="#12502d">
        <path d="M14 7.500h8M14 10.500h8M14 13.500h8M14 16.500h8M18 5v14" stroke="#217346" />
      </OfficeIcon>
    ),
    running: true,
    stacked: true,
  },
  {
    name: 'Publisher',
    icon: (
      <OfficeIcon letter="P" color="#077568" dark="#055247">
        <path d="M14 7.500h5.500V20M14 10.500h4M14 13.500h4M14 16.500h4" stroke="#077568" />
      </OfficeIcon>
    ),
  },
  {
    name: 'PowerPoint',
    icon: (
      <OfficeIcon letter="P" color="#d24726" dark="#a83518">
        <circle cx="18" cy="9" r="3" fill="#d24726" />
        <path d="M18 9V5h4v4z" fill="#fff" />
        <path d="M15 14.500h7M15 17h7" stroke="#d24726" />
      </OfficeIcon>
    ),
  },
  { name: 'Reproductor', icon: <MediaIcon /> },
  { name: 'Firewall', icon: <FirewallIcon />, focused: true },
  { name: 'Skype', icon: <SkypeIcon />, running: true, stacked: true },
  {
    name: 'Access',
    icon: (
      <OfficeIcon letter="A" color="#a4373a" dark="#7d2226">
        <path d="M14 8c3 1.500 6 1.500 9 0M14 12c3 1.500 6 1.500 9 0M14 16c3 1.500 6 1.500 9 0" stroke="#a4373a" />
      </OfficeIcon>
    ),
  },
]

function TaskbarApp({ app }) {
  return (
    <button
      type="button"
      aria-label={app.name}
      className={`relative flex h-full w-[49px] items-center justify-center ${app.focused ? 'bg-[#1b1e22]' : ''}`}
    >
      {app.icon}
      {app.running && (
        <span className="absolute inset-x-[5px] bottom-0 flex h-0.5">
          <span className="flex-1 bg-[#76b9ed]" />
          {app.stacked && <span className="w-2 bg-[#4d83b1]" />}
        </span>
      )}
    </button>
  )
}

function Taskbar() {
  return (
    <div className="flex h-10 shrink-0 items-center bg-[#010308] text-white">
      <button type="button" aria-label="Inicio" className="flex w-12 justify-center">
        <Svg w={16} h={16}><path d="M0 2.300L6.500 1.400v6.100H0zM7.500 1.200L16 0v7.500H7.500zM0 8.500h6.500v6.100L0 13.700zM7.500 8.500H16V16l-8.500-1.200z" fill="#fff" /></Svg>
      </button>
      <button type="button" aria-label="Buscar" className="flex w-12 justify-center">
        <Svg w={17} h={17}>
          <circle cx="10.500" cy="6" r="5" stroke="#fff" strokeWidth="1.400" />
          <path d="M7 9.500L.8 16" stroke="#fff" strokeWidth="1.600" />
        </Svg>
      </button>
      <button type="button" aria-label="Vista de tareas" className="flex w-12 justify-center">
        <Svg w={20} h={15}><path d="M4.500 1.500h11v12h-11zM3 3.500H.5v8H3M17 3.500h2.500v8H17" stroke="#fff" /></Svg>
      </button>
      <div className="ml-px flex h-full">
        {APPS.map((app) => <TaskbarApp key={app.name} app={app} />)}
      </div>

      <div className="ml-auto flex h-full items-center">
        <button type="button" aria-label="Mostrar iconos ocultos" className="mr-2.5">
          <Svg w={12} h={8}><path d="M1 7l5-5 5 5" stroke="#fff" strokeWidth="1.400" /></Svg>
        </button>
        <button type="button" aria-label="Batería" className="mr-2.5">
          <Svg w={17} h={14}>
            <path d="M5 3.500h9.500v9H6M15 6h1.500v4H15" stroke="#fff" />
            <path d="M1.500 1v3M4.500 1v3M3 7v5" stroke="#fff" />
            <path d="M0 3h6v3L4 8H2L0 6z" fill="#fff" />
          </Svg>
        </button>
        <button type="button" aria-label="Red" className="mr-2">
          <Svg w={14} h={14}>
            <path d="M1 12C1 6 6 1 13 1" stroke="#888" strokeWidth="1.300" />
            <path d="M3 13c0-5 4-9 10-9M6 13c0-4 3-6 7-6" stroke="#fff" strokeWidth="1.300" />
            <path d="M9 13c0-2 1.500-3 4-3v3z" fill="#fff" />
          </Svg>
        </button>
        <button type="button" aria-label="Volumen" className="mr-2">
          <Svg w={17} h={14}>
            <path d="M.5 5H3l4-4v12L3 9H.5z" stroke="#fff" />
            <path d="M9 5c1 1 1 3 0 4M11 3c2 2 2 6 0 8M13 1c3 3 3 9 0 12" stroke="#fff" />
          </Svg>
        </button>
        <button type="button" aria-label="Centro de actividades" className="mr-3">
          <Svg w={16} h={17}>
            <path d="M0 0h16v13h-6l-2 3-2-3H0z" fill="#fff" />
            <path d="M3 4h10M3 6.500h10M3 9h6" stroke="#05070c" />
          </Svg>
        </button>
        <div className="mr-1.5 text-center text-xs leading-[17px] whitespace-nowrap">
          <p>7:01 p. m.</p>
          <p>24/07/2016</p>
        </div>
        <div className="mr-1 h-full w-px bg-[#4a4c50]" />
      </div>
    </div>
  )
}

export default function App() {
  return (
    <div className="flex h-screen flex-col overflow-hidden bg-[#e6e6e6] font-['Open_Sans',sans-serif] text-xs">
      <header className="bg-[#217346]">
        <TitleBar />
        <TabBar />
      </header>
      <Ribbon />
      <FormulaBar />
      <Sheet />
      <SheetTabs />
      <StatusBar />
      <Taskbar />
    </div>
  )
}
